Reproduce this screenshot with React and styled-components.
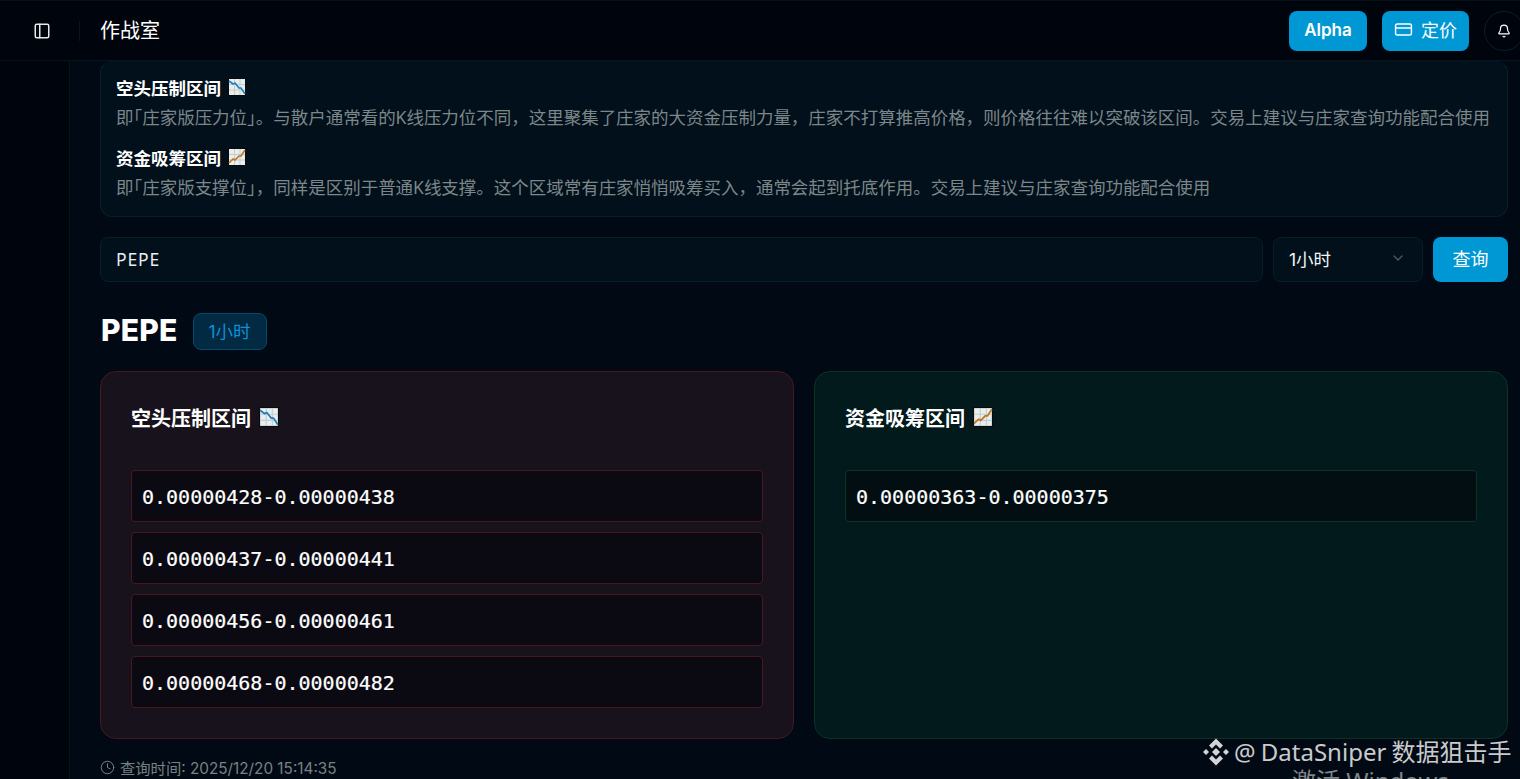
import React from 'react';
import styled, {createGlobalStyle} from 'styled-components';
import {Bell, ChevronDown, Clock, CreditCard, PanelLeft} from 'lucide-react';

const SANS = `"Inter", "Liberation Sans", "Noto Sans CJK SC", sans-serif`;
const CJK = `"Noto Sans", "Noto Sans CJK SC", sans-serif`;

const GlobalStyle = createGlobalStyle`
	html, body {
		margin: 0;
		height: 100%;
		overflow: hidden;
		background: #010a14;
	}
	* {
		box-sizing: border-box;
	}
`;

const Page = styled.div`
	position: relative;
	display: flex;
	flex-direction: column;
	width: 1520px;
	height: 779px;
	overflow: hidden;
	font-family: ${SANS};
	color: #fff;
`;

const Header = styled.header`
	display: flex;
	align-items: center;
	flex: none;
	height: 61px;
	padding-left: 33px;
	background: #00040d;
	border-top: 1px solid #03101a;
	border-bottom: 1px solid #04141d;
`;

const Divider = styled.div`
	width: 1px;
	height: 20px;
	margin: 0 20px 0 28px;
	background: #07161f;
`;

const Title = styled.div`
	flex: 1;
	font-family: ${CJK};
	font-size: 20px;
	line-height: 28px;
`;

const Actions = styled.div`
	display: flex;
	align-items: center;
	flex: none;
	gap: 15px;
	margin-right: -4px;
`;

const HeaderButton = styled.button`
	display: flex;
	align-items: center;
	justify-content: center;
	gap: 8px;
	width: ${(props) => props.width};
	height: 40px;
	padding: 0 0 2px;
	border: none;
	border-radius: 8px;
	background: #0098d4;
	color: #fff;
	font-family: ${SANS};
	font-size: ${(props) => props.size};
	font-weight: ${(props) => props.weight};
`;

const PriceLabel = styled.span`
	margin-bottom: 2px;
`;

const BellButton = styled.div`
	display: flex;
	align-items: center;
	justify-content: center;
	width: 40px;
	height: 40px;
	border: 1px solid #08202b;
	border-radius: 50%;
`;

const Body = styled.div`
	display: flex;
	flex: 1;
	min-height: 0;
`;

const Sidebar = styled.aside`
	flex: none;
	width: 70px;
	background: #00040c;
	border-right: 1px solid #04141d;
`;

const Main = styled.main`
	flex: 1;
	min-width: 0;
	padding: 0 12px 0 30px;
	background: #010a14;
`;

const IntroCard = styled.section`
	height: 156px;
	padding: 12px 15px 0;
	border: 1px solid #06202b;
	border-top-color: #05161f;
	border-radius: 12px;
	background: #01101b;
`;

const IntroHeading = styled.h3`
	display: flex;
	align-items: center;
	gap: 7px;
	height: 26px;
	margin: 0;
	font-family: ${CJK};
	font-size: 17.5px;
	font-weight: 700;
	color: #fff;
`;

const IntroText = styled.p`
	height: 34px;
	margin: 0 0 10px;
	font-family: ${CJK};
	font-size: 17.5px;
	line-height: 34px;
	letter-spacing: -0.025px;
	white-space: nowrap;
	color: #7d8689;
`;

const Bracket = styled.span`
	font-feature-settings: "halt";
`;

const QueryRow = styled.div`
	display: flex;
	gap: 10px;
	height: 45px;
	margin-top: 20px;
`;

const SearchInput = styled.div`
	display: flex;
	align-items: center;
	flex: 1;
	padding: 0 0 2px 15px;
	border: 1px solid #06202b;
	border-radius: 8px;
	background: #01101b;
	font-family: ${CJK};
	font-size: 17.5px;
	letter-spacing: 0.9px;
	color: #e8edef;
`;

const Select = styled.div`
	display: flex;
	align-items: center;
	justify-content: space-between;
	width: 150px;
	padding: 0 16px 3px 15px;
	border: 1px solid #06202b;
	border-radius: 8px;
	background: #01101b;
	font-family: ${SANS};
	font-size: 17.5px;
	color: #f2f5f6;
`;

const QueryButton = styled.button`
	width: 75px;
	padding: 0 0 4px;
	border: none;
	border-radius: 8px;
	background: #0098d4;
	color: #fff;
	font-family: ${CJK};
	font-size: 18px;
`;

const ResultHeading = styled.div`
	display: flex;
	align-items: center;
	gap: 15px;
	height: 37px;
	margin-top: 31px;
`;

const Symbol_ = styled.h2`
	margin: 0 0 3px 1px;
	font-family: "Inter", "Liberation Sans", sans-serif;
	font-size: 30px;
	font-weight: 800;
	letter-spacing: 0.2px;
	color: #fff;
`;

const Badge = styled.span`
	display: flex;
	align-items: center;
	justify-content: center;
	width: 74px;
	height: 37px;
	padding-bottom: 2px;
	border: 1px solid #044a6c;
	border-radius: 8px;
	background: #022a42;
	font-family: ${SANS};
	font-size: 17.5px;
	color: #0e90d8;
`;

const Panels = styled.div`
	display: grid;
	grid-template-columns: 1fr 1fr;
	gap: 20px;
	height: 368px;
	margin-top: 21px;
`;

const Panel = styled.section`
	padding: 30px;
	border: 1px solid ${(props) => (props.tone === 'short' ? '#47191f' : '#0a3324')};
	border-radius: 16px;
	background: ${(props) => (props.tone === 'short' ? '#17121b' : '#021a1c')};
`;

const PanelHeading = styled.h3`
	display: flex;
	align-items: center;
	gap: 8px;
	height: 30px;
	margin: 0 0 38px;
	font-family: ${CJK};
	font-size: 20px;
	font-weight: 700;
	color: #fff;
`;

const RangeList = styled.div`
	display: flex;
	flex-direction: column;
	gap: 10px;
`;

const RangeRow = styled.div`
	display: flex;
	align-items: center;
	height: 52px;
	padding: 2px 0 0 10px;
	border: 1px solid ${(props) => (props.tone === 'short' ? '#47191f' : '#0a3324')};
	border-radius: 4px;
	background: ${(props) => (props.tone === 'short' ? '#0b0a12' : '#020e11')};
	font-family: "DejaVu Sans Mono", "Liberation Mono", monospace;
	font-size: 20px;
	-webkit-text-stroke: 0.2px #fff;
	color: #fff;
`;

const QueryTime = styled.div`
	display: flex;
	align-items: center;
	gap: 5px;
	height: 20px;
	margin-top: 18px;
	font-family: ${SANS};
	font-size: 15.3px;
	color: #788185;
`;

const Watermark = styled.div`
	position: absolute;
	left: 1202px;
	top: 737px;
	display: flex;
	align-items: center;
	gap: 4px;
	font-family: ${CJK};
	font-size: 24px;
	line-height: 30px;
	word-spacing: -1px;
	white-space: nowrap;
	color: #c9cbcc;
`;

const ActivateText = styled.div`
	position: absolute;
	left: 1292px;
	top: 764px;
	font-family: ${CJK};
	font-size: 24px;
	line-height: 34px;
	white-space: nowrap;
	color: #7f8688;
`;

const ChartEmoji = ({color, points, size}) => (
	<svg width={size} height={size} viewBox='0 0 18 18'>
		<rect x='0' y='0' width='18' height='18' fill='#0a0a0c' />
		<rect x='1' y='1' width='16' height='16' fill='#e8eeee' />
		<path d='M1 6.5H17M1 12H17M6.5 1V17M12 1V17' stroke='#c3cdcd' strokeWidth='1' />
		<polyline points={points} fill='none' stroke={color} strokeWidth='1.6' />
	</svg>
);

const DownEmoji = ({size}) => (
	<ChartEmoji size={size} color='#1e7fc0' points='1,3 5,6 7,5 11,10 13,10 17,16' />
);
const UpEmoji = ({size}) => (
	<ChartEmoji size={size} color='#c8741e' points='1,15 5,11 7,12 11,8 13,8 17,2' />
);

const BinanceLogo = () => (
	<svg width='28' height='28' viewBox='0 0 28 28' fill='#d2d4d5'>
		<path d='M14 0.5L21 7.5L18 10.5L14 6.5L10 10.5L7 7.5Z' />
		<path d='M14 27.5L7 20.5L10 17.5L14 21.5L18 17.5L21 20.5Z' />
		<path d='M4 11L7 14L4 17L1 14Z' />
		<path d='M24 11L27 14L24 17L21 14Z' />
		<path d='M14 10L18 14L14 18L10 14Z' />
	</svg>
);

const SHORT_RANGES = [
	'0.00000428-0.00000438',
	'0.00000437-0.00000441',
	'0.00000456-0.00000461',
	'0.00000468-0.00000482',
];
const LONG_RANGES = ['0.00000363-0.00000375'];

const RangePanel = ({tone, title, icon, ranges}) => (
	<Panel tone={tone}>
		<PanelHeading>
			{title}
			{icon}
		</PanelHeading>
		<RangeList>
			{ranges.map((range) => (
				<RangeRow key={range} tone={tone}>
					{range}
				</RangeRow>
			))}
		</RangeList>
	</Panel>
);

const App = () => {
	return (
		<Page>
			<GlobalStyle />
			<Header>
				<PanelLeft size={18} strokeWidth={2} color='#e6e9ea' />
				<Divider />
				<Title>作战室</Title>
				<Actions>
					<HeaderButton width='78px' size='17px' weight={600}>
						Alpha
					</HeaderButton>
					<HeaderButton width='87px' size='18px' weight={400}>
						<CreditCard size={19} strokeWidth={1.8} />
						<PriceLabel>定价</PriceLabel>
					</HeaderButton>
					<BellButton>
						<Bell size={14} strokeWidth={2} color='#fff' />
					</BellButton>
				</Actions>
			</Header>
			<Body>
				<Sidebar />
				<Main>
					<IntroCard>
						<IntroHeading>
							空头压制区间
							<DownEmoji size={18} />
						</IntroHeading>
						<IntroText>
							即<Bracket>「</Bracket>庄家版压力位<Bracket>」</Bracket>。与散户通常看的K线压力位不同，这里聚集了庄家的大资金压制力量，庄家不打算推高价格，则价格往往难以突破该区间。交易上建议与庄家查询功能配合使用
						</IntroText>
						<IntroHeading>
							资金吸筹区间
							<UpEmoji size={18} />
						</IntroHeading>
						<IntroText>
							即<Bracket>「</Bracket>庄家版支撑位<Bracket>」</Bracket>，同样是区别于普通K线支撑。这个区域常有庄家悄悄吸筹买入，通常会起到托底作用。交易上建议与庄家查询功能配合使用
						</IntroText>
					</IntroCard>
					<QueryRow>
						<SearchInput>PEPE</SearchInput>
						<Select>
							1小时
							<ChevronDown size={16} color='#4d575c' />
						</Select>
						<QueryButton>查询</QueryButton>
					</QueryRow>
					<ResultHeading>
						<Symbol_>PEPE</Symbol_>
						<Badge>1小时</Badge>
					</ResultHeading>
					<Panels>
						<RangePanel
							tone='short'
							title='空头压制区间'
							icon={<DownEmoji size={20} />}
							ranges={SHORT_RANGES}
						/>
						<RangePanel
							tone='long'
							title='资金吸筹区间'
							icon={<UpEmoji size={20} />}
							ranges={LONG_RANGES}
						/>
					</Panels>
					<QueryTime>
						<Clock size={15} strokeWidth={1.6} />
						查询时间: 2025/12/20 15:14:35
					</QueryTime>
				</Main>
			</Body>
			<Watermark>
				<BinanceLogo />@ DataSniper 数据狙击手
			</Watermark>
			<ActivateText>激活 Windows</ActivateText>
		</Page>
	);
};

export default App;
